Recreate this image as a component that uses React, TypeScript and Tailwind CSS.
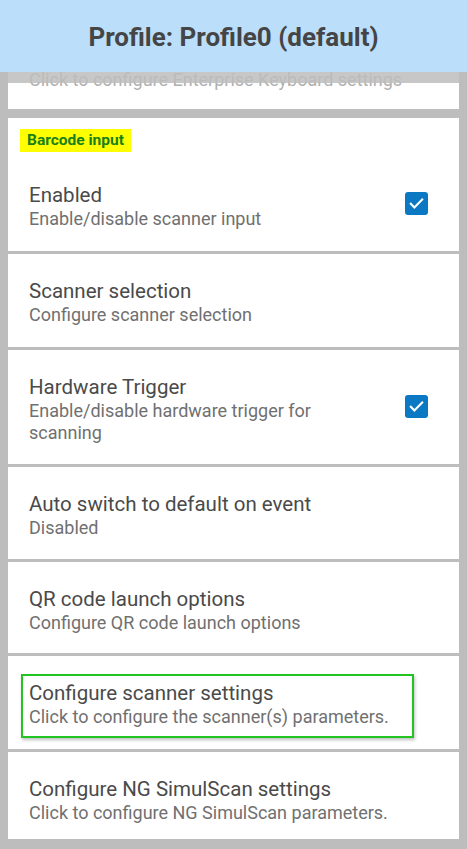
import React from "react";

type Row = {
  title: string;
  subtitle: string;
  h: number;
  checked?: boolean;
  highlight?: boolean;
};

const rows: Row[] = [
  { title: "Scanner selection", subtitle: "Configure scanner selection", h: 93 },
  {
    title: "Hardware Trigger",
    subtitle: "Enable/disable hardware trigger for scanning",
    h: 114,
    checked: true,
  },
  { title: "Auto switch to default on event", subtitle: "Disabled", h: 92 },
  { title: "QR code launch options", subtitle: "Configure QR code launch options", h: 91 },
  {
    title: "Configure scanner settings",
    subtitle: "Click to configure the scanner(s) parameters.",
    h: 93,
    highlight: true,
  },
  {
    title: "Configure NG SimulScan settings",
    subtitle: "Click to configure NG SimulScan parameters.",
    h: 87,
  },
];

function Check() {
  return (
    <div className="w-[23px] h-[23px] shrink-0 rounded-[3px] bg-[#0a78c2] flex items-center justify-center">
      <svg width="17" height="17" viewBox="0 0 24 24" fill="none">
        <path d="M4 12.5l5 5L20 6.5" stroke="white" strokeWidth="3" strokeLinecap="square" />
      </svg>
    </div>
  );
}

function Texts({ title, subtitle, narrow }: { title: string; subtitle: string; narrow?: boolean }) {
  return (
    <div className={narrow ? "min-w-0 max-w-[355px]" : "min-w-0 whitespace-nowrap"}>
      <div className="text-[20.5px] leading-[26px] text-[#4a4a4a]">{title}</div>
      <div className="text-[18px] leading-[22px] text-[#707070]">{subtitle}</div>
    </div>
  );
}

function Item({ row }: { row: Row }) {
  return (
    <div
      className="relative bg-white flex items-start pl-[21px] pr-[31px] pt-[24px]"
      style={{ height: row.h }}
    >
      <Texts title={row.title} subtitle={row.subtitle} narrow={row.checked} />
      {row.checked && (
        <div className="ml-auto self-center -mt-[26px]">
          <Check />
        </div>
      )}
      {row.highlight && (
        <div className="absolute left-[13px] top-[18px] w-[393px] h-[64px] border-2 border-[#22c422] shadow-[1px_2px_3px_rgba(0,0,0,0.25)] pointer-events-none" />
      )}
    </div>
  );
}

export default function App() {
  return (
    <div className="w-[467px] h-[849px] overflow-hidden bg-[#bdbdbd] font-['Roboto',sans-serif] flex flex-col">
      <header className="relative z-10 h-[72px] shrink-0 bg-[#bbdefb] flex items-center justify-center shadow-[0_11px_0_rgba(189,189,189,0.85)]">
        <h1 className="text-[26px] font-bold text-[#454545] mt-[3px]">Profile: Profile0 (default)</h1>
      </header>
      <div className="px-2 flex flex-col">
        <div className="h-[37px] bg-white flex items-end pl-[21px] pb-[18px] overflow-hidden">
          <div className="text-[18px] leading-[22px] text-[#b0b0b0] whitespace-nowrap">
            Click to configure Enterprise Keyboard settings
          </div>
        </div>
        <div className="mt-[9px] bg-white">
          <div className="pt-[10px] pl-[12px] pb-[6px]">
            <span className="inline-block h-[23px] leading-[23px] px-[7px] bg-[#ffff00] text-[15.5px] font-bold text-[#188018]">
              Barcode input
            </span>
          </div>
          <div className="flex items-start pl-[21px] pr-[31px] pt-[24px] h-[93px]">
            <Texts title="Enabled" subtitle="Enable/disable scanner input" narrow />
            <div className="ml-auto self-center -mt-[26px]">
              <Check />
            </div>
          </div>
        </div>
        <div className="mt-[3px] flex flex-col gap-[3px]">
          {rows.map((r) => (
            <Item key={r.title} row={r} />
          ))}
        </div>
      </div>
    </div>
  );
}
